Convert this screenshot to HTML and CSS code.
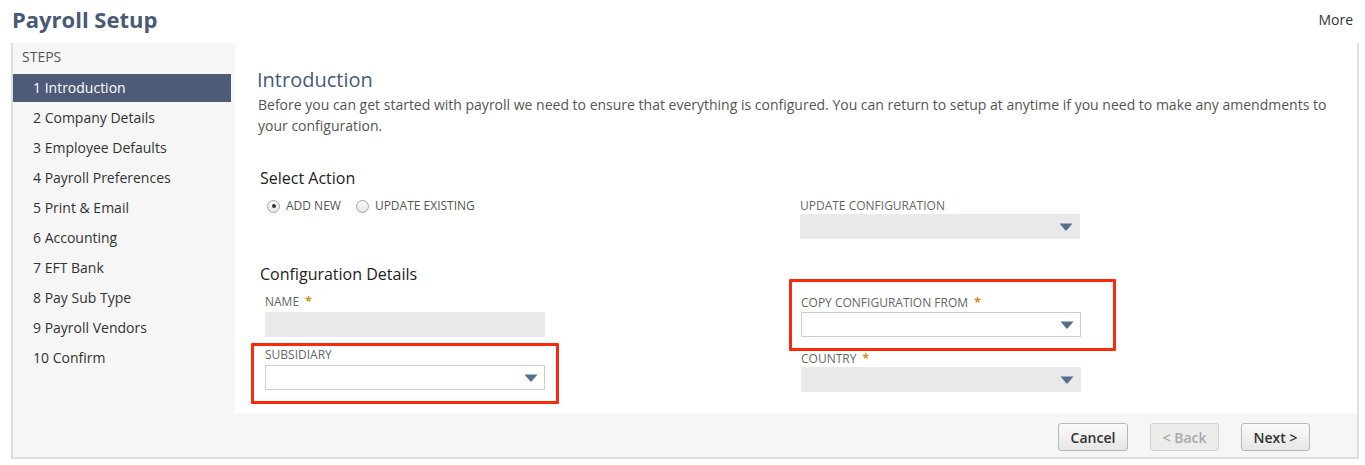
FILE: index.html
```html
<!DOCTYPE html>
<html lang="en">
<head>
<meta charset="utf-8">
<title>Payroll Setup</title>
<link rel="stylesheet" href="styles.css">
</head>
<body>
<header class="page-header">
  <h1 class="page-title">Payroll Setup</h1>
  <a class="more-link">More</a>
</header>
<div class="wizard">
  <div class="wizard-main">
    <nav class="steps">
      <div class="steps-title">STEPS</div>
      <ul class="steps-list">
        <li class="step active">1 Introduction</li>
        <li class="step">2 Company Details</li>
        <li class="step">3 Employee Defaults</li>
        <li class="step">4 Payroll Preferences</li>
        <li class="step">5 Print &amp; Email</li>
        <li class="step">6 Accounting</li>
        <li class="step">7 EFT Bank</li>
        <li class="step">8 Pay Sub Type</li>
        <li class="step">9 Payroll Vendors</li>
        <li class="step">10 Confirm</li>
      </ul>
    </nav>
    <section class="content">
      <h2 class="content-title">Introduction</h2>
      <p class="content-text">Before you can get started with payroll we need to ensure that everything is configured. You can return to setup at anytime if you need to make any amendments to your configuration.</p>
      <div class="columns">
        <div class="col col-left">
          <h3 class="section-title">Select Action</h3>
          <div class="radio-row">
            <label class="radio"><span class="radio-dot checked"></span>ADD NEW</label>
            <label class="radio"><span class="radio-dot"></span>UPDATE EXISTING</label>
          </div>
          <h3 class="section-title section-title-2">Configuration Details</h3>
          <div class="field field-name">
            <div class="field-label">NAME <span class="req">*</span></div>
            <div class="input disabled"></div>
          </div>
          <div class="highlight highlight-left">
            <div class="field">
              <div class="field-label">SUBSIDIARY</div>
              <div class="select">
                <svg class="arrow" width="14" height="8" viewBox="0 0 14 8"><path d="M0.5 0.5 H13.5 L8 7 Q7 8 6 7 Z" fill="#5a6d8c"/></svg>
              </div>
            </div>
          </div>
        </div>
        <div class="col col-right">
          <div class="field field-update">
            <div class="field-label">UPDATE CONFIGURATION</div>
            <div class="select disabled">
              <svg class="arrow" width="14" height="8" viewBox="0 0 14 8"><path d="M0.5 0.5 H13.5 L8 7 Q7 8 6 7 Z" fill="#5a6d8c"/></svg>
            </div>
          </div>
          <div class="highlight highlight-right">
            <div class="field">
              <div class="field-label">COPY CONFIGURATION FROM <span class="req">*</span></div>
              <div class="select">
                <svg class="arrow" width="14" height="8" viewBox="0 0 14 8"><path d="M0.5 0.5 H13.5 L8 7 Q7 8 6 7 Z" fill="#5a6d8c"/></svg>
              </div>
            </div>
          </div>
          <div class="field field-country">
            <div class="field-label">COUNTRY <span class="req">*</span></div>
            <div class="select disabled">
              <svg class="arrow" width="14" height="8" viewBox="0 0 14 8"><path d="M0.5 0.5 H13.5 L8 7 Q7 8 6 7 Z" fill="#5a6d8c"/></svg>
            </div>
          </div>
        </div>
      </div>
    </section>
  </div>
  <footer class="wizard-footer">
    <button class="btn">Cancel</button>
    <button class="btn btn-disabled">&lt; Back</button>
    <button class="btn">Next &gt;</button>
  </footer>
</div>
</body>
</html>
```

FILE: styles.css
```css
* { box-sizing: border-box; }
html, body { margin: 0; padding: 0; background: #fff; }
body {
  font-family: "Open Sans", "Liberation Sans", Arial, sans-serif;
  color: #333;
  width: 1365px;
  height: 465px;
  overflow: hidden;
}

.page-header {
  height: 43px;
  display: flex;
  justify-content: space-between;
  align-items: flex-start;
  padding: 0 12px 0 12px;
}
.page-title {
  margin: 0;
  padding-top: 4px;
  font-size: 22px;
  line-height: 30px;
  font-weight: 700;
  color: #4a5a76;
}
.more-link {
  padding-top: 10px;
  font-size: 14px;
  line-height: 20px;
  color: #333;
}

.wizard {
  margin-left: 11px;
  width: 1348px;
  background: #f6f6f6;
  border-left: 2px solid #dedede;
  border-right: 2px solid #dedede;
  border-bottom: 2px solid #dedede;
}
.wizard-main {
  display: flex;
  height: 370px;
}

.steps {
  width: 222px;
  flex: none;
  padding: 5px 4px 0 0;
}
.steps-title {
  padding-left: 9px;
  font-size: 14px;
  line-height: 18px;
  color: #555;
  margin-bottom: 8px;
}
.steps-list {
  list-style: none;
  margin: 0;
  padding: 0;
}
.step {
  height: 28px;
  line-height: 28px;
  margin-bottom: 2px;
  padding-left: 20px;
  font-size: 14px;
  color: #333;
}
.step.active {
  background: #4d5b78;
  color: #fff;
}

.content {
  flex: 1;
  background: #fff;
  padding: 25px 20px 0 22px;
}
.content-title {
  margin: 0;
  font-size: 20px;
  line-height: 24px;
  font-weight: 400;
  color: #4a5a76;
}
.content-text {
  margin: 2px 0 0 1px;
  font-size: 14px;
  line-height: 21px;
  color: #555;
}

.columns {
  display: flex;
  margin-top: 31px;
  padding-left: 3px;
}
.col-left { width: 540px; }
.col-right { width: 340px; padding-top: 31px; }

.section-title {
  margin: 0;
  font-size: 16px;
  line-height: 22px;
  font-weight: 400;
  color: #222;
}
.section-title-2 { margin-top: 49px; }

.radio-row {
  display: flex;
  gap: 15px;
  margin-top: 9px;
  padding-left: 7px;
  height: 16px;
  align-items: center;
}
.radio {
  display: flex;
  align-items: center;
  font-size: 12px;
  line-height: 16px;
  color: #555;
}
.radio-dot {
  width: 13px;
  height: 13px;
  border-radius: 50%;
  border: 1px solid #a5a5a5;
  background: linear-gradient(#fdfdfd, #e4e4e4);
  margin-right: 6px;
  position: relative;
}
.radio-dot.checked::after {
  content: "";
  position: absolute;
  left: 3.5px;
  top: 3.5px;
  width: 4px;
  height: 4px;
  border-radius: 50%;
  background: #333;
}

.field-label {
  font-size: 12px;
  line-height: 16px;
  color: #666;
  white-space: nowrap;
}
.req {
  color: #d08a18;
  font-weight: 700;
  margin-left: 3px;
}
.input, .select {
  width: 280px;
  height: 25px;
  border: 1px solid #cdcdcd;
  background: #fff;
  position: relative;
}
.input.disabled, .select.disabled {
  background: #e9e9e9;
  border-color: #e9e9e9;
}
.arrow {
  position: absolute;
  right: 6px;
  top: 8px;
}

.field-name { margin-top: 9px; padding-left: 5px; }
.field-name .field-label { margin-bottom: 2px; }

.highlight {
  border: 3px solid #fb2a0c;
  border-radius: 1px;
}
.highlight-left {
  width: 308px;
  margin-top: 6px;
  margin-left: -9px;
  padding: 1px 11px 11px 11px;
}
.highlight-left .field-label { margin-bottom: 2px; }

.field-update .field-label { margin-bottom: 0; }

.highlight-right {
  width: 327px;
  margin-top: 40px;
  margin-left: -11px;
  padding: 13px 32px 11px 9px;
}
.highlight-right .field-label { margin-bottom: 1px; }

.field-country { padding-left: 1px; }
.field-country .field-label { margin-bottom: 0; }

.wizard-footer {
  height: 44px;
  display: flex;
  justify-content: flex-end;
  align-items: flex-start;
  gap: 22px;
  padding: 10px 47px 0 0;
}
.btn {
  height: 28px;
  width: 70px;
  padding: 0;
  border: 1px solid #b8b8b8;
  border-radius: 3px;
  background: linear-gradient(#fafafa, #e6e6e6);
  font-family: "Open Sans", "Liberation Sans", Arial, sans-serif;
  font-size: 14px;
  font-weight: 600;
  color: #333;
}
.btn-disabled {
  width: 69px;
  color: #a9a9a9;
  border-color: #d2d2d2;
  background: #ececec;
}
.btn:last-child { width: 69px; }
```
